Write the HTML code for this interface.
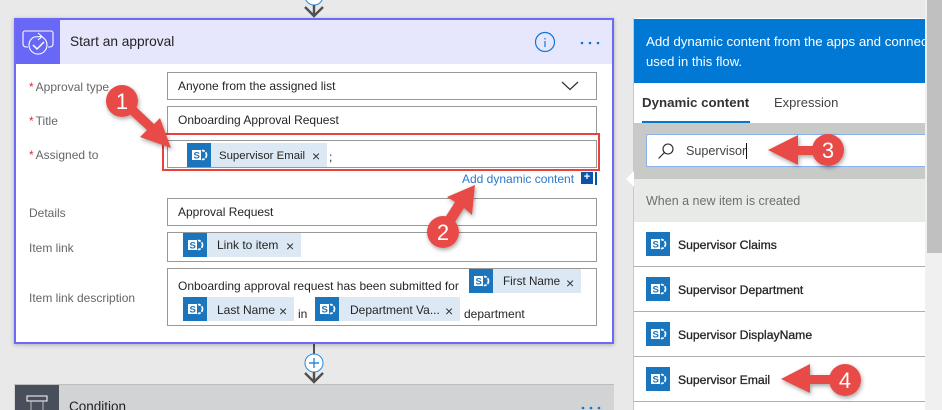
<!DOCTYPE html>
<html><head><meta charset="utf-8">
<style>
html,body{margin:0;padding:0;background:#e9e9e9}
#p{position:relative;width:942px;height:410px;overflow:hidden;background:#e9e9e9;font-family:"Liberation Sans",sans-serif;font-size:12px;color:#252525}
#p div,#p span.t{position:absolute;white-space:nowrap;box-sizing:border-box}
.f{left:167px;width:430px;background:#fff;border:1px solid #989898}
.l{left:29px;color:#666;line-height:16px;font-size:12px}
.l b{color:#d13438;font-weight:400;margin-right:2px}
.t{line-height:16px}
.chip{background:#dce8f4;height:24px}
.sp{width:24px;height:24px;background:#1b75bc;left:0;top:0}
.sp svg,.li svg{display:block}
.x{color:#333;font-size:14px;line-height:16px}
.li{left:646px;width:24px;height:24px;background:#1b75bc}
.n{left:678px;font-weight:400;-webkit-text-stroke:.3px #252525;font-size:12.2px;line-height:16px;color:#252525}
.h{left:634px;width:291px;height:1px;background:#aeaeae}
</style></head><body><div id="p">

<svg style="position:absolute;left:0;top:0" width="942" height="410">
<circle cx="314" cy="-4" r="9" fill="#fff" stroke="#2b88d8"/>
<path d="M305 7l9 9 9-9M314 5v11" fill="none" stroke="#505050" stroke-width="2.400"/>
<path d="M314 344v10" stroke="#505050" stroke-width="2"/>
<circle cx="314" cy="363" r="9" fill="#fff" stroke="#2b88d8"/>
<path d="M309 363h10M314 358v10" stroke="#2b88d8" stroke-width="1.400"/>
<path d="M305 373l9 9 9-9M314 372v10" fill="none" stroke="#505050" stroke-width="2.400"/>
</svg>

<!-- approval card -->
<div style="left:14px;top:18px;width:600px;height:326px;background:#fff;border:2px solid #6b69f5;box-shadow:0 1px 4px rgba(0,0,0,.25)"></div>
<div style="left:16px;top:20px;width:596px;height:44px;background:#e6e6fc"></div>
<div style="left:16px;top:20px;width:44px;height:44px;background:#6967f5">
<svg width="44" height="44" fill="none" stroke="#fff" stroke-width="1.100">
<path d="M12 27h-2a3 3 0 0 1-3-3v-11a2 2 0 0 1 2-2h26a2 2 0 0 1 2 2v11a3 3 0 0 1-3 3h-2"/>
<path d="M18 17a9 9 0 1 0 8 0"/>
<path d="M18 17l7-.500M22 13l4 3.500-4 3.500"/>
<path d="M17 25l4 4 7-7" stroke-width="1.500"/>
</svg></div>
<span class="t" style="left:70px;top:34px;font-size:13.7px;color:#222">Start an approval</span>
<svg style="position:absolute;left:530px;top:28px" width="80" height="28">
<circle cx="15" cy="14" r="9.500" fill="none" stroke="#0b78d6" stroke-width="1.200"/>
<path d="M15 10v1.500M15 13v6" stroke="#0b78d6" stroke-width="1.200"/>
<circle cx="52" cy="15" r="1.300" fill="#0b78d6"/><circle cx="60" cy="15" r="1.300" fill="#0b78d6"/><circle cx="68" cy="15" r="1.300" fill="#0b78d6"/>
</svg>

<div class="l" style="top:79px"><b>*</b>Approval type</div>
<div class="l" style="top:113px"><b>*</b>Title</div>
<div class="l" style="top:147px"><b>*</b>Assigned to</div>
<div class="l" style="top:205px">Details</div>
<div class="l" style="top:240px">Item link</div>
<div class="l" style="top:290px">Item link description</div>

<div class="f" style="top:72px;height:28px"></div>
<span class="t" style="left:178px;top:78px">Anyone from the assigned list</span>
<svg style="position:absolute;left:560px;top:80px" width="20" height="12"><path d="M2 2l8 7.500 8-7.500" fill="none" stroke="#333" stroke-width="1.200"/></svg>

<div class="f" style="top:106px;height:28px"></div>
<span class="t" style="left:178px;top:112px">Onboarding Approval Request</span>

<div class="f" style="top:140px;height:28px"></div>
<div style="left:162px;top:133px;width:438px;height:38px;border:2px solid #e8423f"></div>
<div class="chip" style="left:187px;top:143px;width:140px">
<div class="sp"><svg width="24" height="24"><circle cx="15" cy="12" r="4.500" fill="none" stroke="#fff" stroke-width="1.700" stroke-dasharray="3 1.200"/><path d="M5 7h9v10h-9z" fill="#fff"/><text x="6.500" y="15.500" font-size="9.500" font-weight="700" fill="#1b75bc" font-family="Liberation Sans">S</text></svg></div>
<span class="t" style="left:32px;top:5px;font-size:11.4px">Supervisor Email</span><span class="t x" style="left:125px;top:5px">×</span></div>
<span class="t" style="left:329px;top:149px">;</span>

<span class="t" style="left:462px;top:171px;color:#2b78c9;font-size:12px">Add dynamic content</span>
<div style="left:581px;top:172px;width:12px;height:12px;background:#0b55a8;color:#fff;font-size:11px;line-height:11px;text-align:center;font-weight:700">+</div>
<div style="left:595px;top:172px;width:2px;height:13px;background:#0b55a8"></div>

<div class="f" style="top:198px;height:28px"></div>
<span class="t" style="left:178px;top:204px">Approval Request</span>

<div class="f" style="top:232px;height:30px"></div>
<div class="chip" style="left:183px;top:233px;width:118px">
<div class="sp"><svg width="24" height="24"><circle cx="15" cy="12" r="4.500" fill="none" stroke="#fff" stroke-width="1.700" stroke-dasharray="3 1.200"/><path d="M5 7h9v10h-9z" fill="#fff"/><text x="6.500" y="15.500" font-size="9.500" font-weight="700" fill="#1b75bc" font-family="Liberation Sans">S</text></svg></div>
<span class="t" style="left:34px;top:4px">Link to item</span><span class="t x" style="left:103px;top:5px">×</span></div>

<div class="f" style="top:268px;height:58px"></div>
<span class="t" style="left:178px;top:278px">Onboarding approval request has been submitted for</span>
<div class="chip" style="left:469px;top:269px;width:112px">
<div class="sp"><svg width="24" height="24"><circle cx="15" cy="12" r="4.500" fill="none" stroke="#fff" stroke-width="1.700" stroke-dasharray="3 1.200"/><path d="M5 7h9v10h-9z" fill="#fff"/><text x="6.500" y="15.500" font-size="9.500" font-weight="700" fill="#1b75bc" font-family="Liberation Sans">S</text></svg></div>
<span class="t" style="left:34px;top:5px;font-size:11.7px">First Name</span><span class="t x" style="left:97px;top:6px">×</span></div>
<div class="chip" style="left:183px;top:297px;width:111px">
<div class="sp"><svg width="24" height="24"><circle cx="15" cy="12" r="4.500" fill="none" stroke="#fff" stroke-width="1.700" stroke-dasharray="3 1.200"/><path d="M5 7h9v10h-9z" fill="#fff"/><text x="6.500" y="15.500" font-size="9.500" font-weight="700" fill="#1b75bc" font-family="Liberation Sans">S</text></svg></div>
<span class="t" style="left:34px;top:5px">Last Name</span><span class="t x" style="left:96px;top:6px">×</span></div>
<span class="t" style="left:298px;top:306px">in</span>
<div class="chip" style="left:315px;top:297px;width:145px">
<div class="sp"><svg width="24" height="24"><circle cx="15" cy="12" r="4.500" fill="none" stroke="#fff" stroke-width="1.700" stroke-dasharray="3 1.200"/><path d="M5 7h9v10h-9z" fill="#fff"/><text x="6.500" y="15.500" font-size="9.500" font-weight="700" fill="#1b75bc" font-family="Liberation Sans">S</text></svg></div>
<span class="t" style="left:35px;top:5px">Department Va...</span><span class="t x" style="left:130px;top:6px">×</span></div>
<span class="t" style="left:464px;top:306px">department</span>

<!-- condition card -->
<div style="left:14px;top:384px;width:600px;height:30px;background:#d2d3d5;border-top:1px solid #bdbdbd"></div>
<div style="left:15px;top:385px;width:44px;height:30px;background:#484f5b">
<svg width="44" height="25" fill="none" stroke="#fff"><rect x="12" y="11" width="20" height="5" stroke-width="1"/><path d="M16 16v10M28 16v10" stroke="#bbb"/></svg></div>
<span class="t" style="left:69px;top:399px;font-size:13.5px;color:#222">Condition</span>
<svg style="position:absolute;left:580px;top:404px" width="24" height="6"><circle cx="3" cy="4" r="1.300" fill="#0b78d6"/><circle cx="11" cy="4" r="1.300" fill="#0b78d6"/><circle cx="19" cy="4" r="1.300" fill="#0b78d6"/></svg>

<!-- dynamic panel -->
<div style="left:633px;top:18px;width:1px;height:392px;background:#c8c8c8"></div>
<div style="left:634px;top:18px;width:291px;height:392px;background:#fff"></div>
<div style="left:634px;top:19px;width:291px;height:64px;background:#0078d4;overflow:hidden;color:#fff;font-size:13px;line-height:20px">
<span class="t" style="left:12px;top:13px;line-height:20px;font-size:13.3px">Add dynamic content from the apps and connectors</span>
<span class="t" style="left:12px;top:33px;line-height:20px;font-size:13.1px">used in this flow.</span></div>
<span class="t" style="left:642px;top:95px;font-weight:700;font-size:13.3px;color:#333">Dynamic content</span>
<span class="t" style="left:774px;top:95px;font-size:13px;color:#444">Expression</span>
<div style="left:642px;top:121px;width:108px;height:2px;background:#0078d4"></div>
<div style="left:634px;top:123px;width:291px;height:56px;background:#c8cac8"></div>
<div style="left:646px;top:134px;width:279px;height:33px;background:#fff;border:1px solid #8ab0ee;border-right:0;border-radius:2px 0 0 2px"></div>
<svg style="position:absolute;left:656px;top:142px" width="20" height="18" fill="none" stroke="#222" stroke-width="1.100"><circle cx="12" cy="7" r="5"/><path d="M8.500 10.500l-6 6"/></svg>
<span class="t" style="left:686px;top:143px;color:#444;font-size:12.6px">Supervisor</span>
<div style="left:746px;top:143px;width:1px;height:16px;background:#111"></div>
<div style="left:634px;top:179px;width:291px;height:43px;background:#e8eae8"></div>
<span class="t" style="left:646px;top:193px;color:#6f6f6f;font-size:12.5px">When a new item is created</span>
<svg style="position:absolute;left:624px;top:170px" width="11" height="18"><path d="M10 1l-8 8 8 8z" fill="#fff"/></svg>

<div class="li" style="top:232px"><svg width="24" height="24"><circle cx="15" cy="12" r="4.500" fill="none" stroke="#fff" stroke-width="1.700" stroke-dasharray="3 1.200"/><path d="M5 7h9v10h-9z" fill="#fff"/><text x="6.500" y="15.500" font-size="9.500" font-weight="700" fill="#1b75bc" font-family="Liberation Sans">S</text></svg></div>
<div class="n" style="top:237px">Supervisor Claims</div><div class="h" style="top:266px"></div>
<div class="li" style="top:277px"><svg width="24" height="24"><circle cx="15" cy="12" r="4.500" fill="none" stroke="#fff" stroke-width="1.700" stroke-dasharray="3 1.200"/><path d="M5 7h9v10h-9z" fill="#fff"/><text x="6.500" y="15.500" font-size="9.500" font-weight="700" fill="#1b75bc" font-family="Liberation Sans">S</text></svg></div>
<div class="n" style="top:282px">Supervisor Department</div><div class="h" style="top:311px"></div>
<div class="li" style="top:322px"><svg width="24" height="24"><circle cx="15" cy="12" r="4.500" fill="none" stroke="#fff" stroke-width="1.700" stroke-dasharray="3 1.200"/><path d="M5 7h9v10h-9z" fill="#fff"/><text x="6.500" y="15.500" font-size="9.500" font-weight="700" fill="#1b75bc" font-family="Liberation Sans">S</text></svg></div>
<div class="n" style="top:327px">Supervisor DisplayName</div><div class="h" style="top:356px"></div>
<div class="li" style="top:367px"><svg width="24" height="24"><circle cx="15" cy="12" r="4.500" fill="none" stroke="#fff" stroke-width="1.700" stroke-dasharray="3 1.200"/><path d="M5 7h9v10h-9z" fill="#fff"/><text x="6.500" y="15.500" font-size="9.500" font-weight="700" fill="#1b75bc" font-family="Liberation Sans">S</text></svg></div>
<div class="n" style="top:372px">Supervisor Email</div><div class="h" style="top:401px"></div>

<!-- scrollbar -->
<div style="left:925px;top:0;width:17px;height:410px;background:#f0f0f0"></div>
<div style="left:927px;top:0;width:15px;height:253px;background:#c0c0c0"></div>

<!-- annotations -->
<svg style="position:absolute;left:0;top:0" width="942" height="410">
<defs><filter id="s" x="-30%" y="-30%" width="160%" height="160%"><feDropShadow dx="1" dy="2" stdDeviation="2" flood-color="#000" flood-opacity=".35"/></filter></defs>
<g fill="#e84c47" filter="url(#s)">
<path d="M133 104l21 20 6-6 11 30-31-11 7-7-22-20z"/><circle cx="122" cy="101" r="16"/>
<path d="M475 185l-3 30-8-7-14 22-9-6 14-22-8-5z"/><circle cx="443" cy="232" r="16"/>
<path d="M768 150l30-15v11h20v9h-20v10z"/><circle cx="828" cy="150" r="16"/>
<path d="M781 379l29-15v11h22v9h-22v9z"/><circle cx="845" cy="380" r="16"/>
</g>
<g fill="#fff" font-family="Liberation Sans" font-size="22" text-anchor="middle">
<text x="122" y="109">1</text><text x="443" y="240">2</text><text x="828" y="158">3</text><text x="845" y="388">4</text>
</g></svg>
</div></body></html>
